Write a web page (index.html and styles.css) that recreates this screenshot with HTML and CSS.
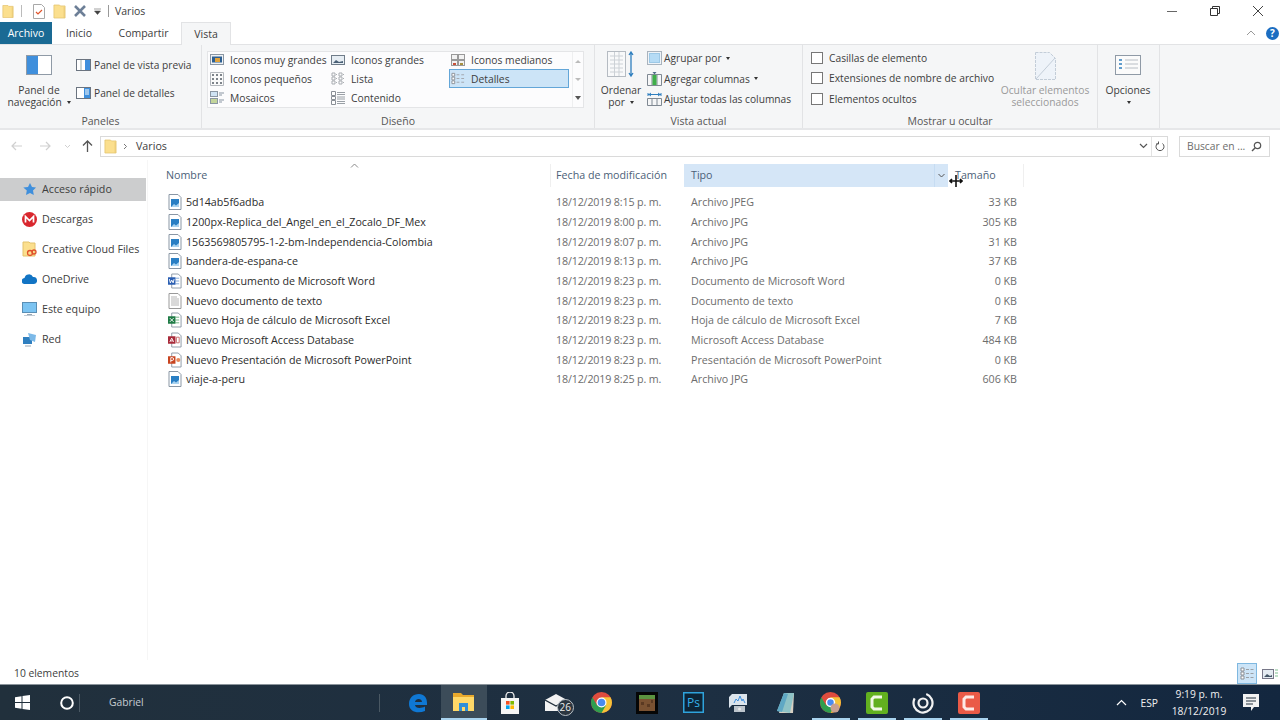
FILE: index.html
```html
<!DOCTYPE html>
<html lang="es">

<head>
    <title>Varios</title>
    <link rel="stylesheet" href="styles.css">
</head>

<body>
    <svg class="defs" width="0" height="0">
        <symbol id="folder" viewBox="0 0 14 16">
            <path d="M1 1h6l1 1h5v13H1z" fill="#fbdf8e" stroke="#e3c26c" stroke-width=".8"/>
            <path d="M12 3v12" stroke="#e8c874"/>
        </symbol>
        <symbol id="jpg" viewBox="0 0 14 16">
            <path d="M1 .5h9l3 3v12H1z" fill="#fff" stroke="#8a97a5"/>
            <rect x="3" y="5" width="8" height="8" fill="#2a7fc4"/>
            <path d="M3 13l3-3 2 1.500 3-2.500v4z" fill="#a9d3f0"/>
        </symbol>
        <symbol id="doc" viewBox="0 0 14 16">
            <path d="M1 .5h9l3 3v12H1z" fill="#fff" stroke="#9a9a9a"/>
            <path d="M3 4h6M3 6h8M3 8h8M3 10h8M3 12h8" stroke="#b5b5b5"/>
        </symbol>
    </svg>

    <!-- title bar -->
    <div class="titlebar">
        <svg class="qa" width="12" height="15"><use href="#folder"/></svg>
        <span class="qa-sep"></span>
        <svg class="qa" width="12" height="15" viewBox="0 0 12 15"><path d="M.5.5h8l3 3v11H.5z" fill="#fff" stroke="#a8a8a8"/><path d="M3 8l2 2 4-4" fill="none" stroke="#e0552c" stroke-width="1.200"/></svg>
        <svg class="qa" width="13" height="15"><use href="#folder"/></svg>
        <svg class="qa" width="12" height="12" viewBox="0 0 12 12"><path d="M1 1l10 10M11 1L1 11" stroke="#6d7f97" stroke-width="2.600"/></svg>
        <svg class="qa qa-drop" width="7" height="7" viewBox="0 0 7 7"><path d="M0 1h7M.5 3h6L3.500 6.500z" fill="#444" stroke="#444" stroke-width=".5"/></svg>
        <span class="qa-sep qa-sep-two"></span>
        <span class="title">Varios</span>
        <div class="winbtns">
            <svg width="12" height="12" viewBox="0 0 12 12"><path d="M1 6.500h10" stroke="#666"/></svg>
            <svg width="12" height="12" viewBox="0 0 12 12"><path d="M1.500 3.500h7v7h-7zM3.500 3.500v-2h7v7h-2" fill="none" stroke="#333"/></svg>
            <svg width="12" height="12" viewBox="0 0 12 12"><path d="M1 1l10 10M11 1L1 11" stroke="#444"/></svg>
        </div>
    </div>

    <!-- tabs -->
    <div class="tabs">
        <div class="tab tab-file">Archivo</div>
        <div class="tab tab-inicio">Inicio</div>
        <div class="tab tab-compartir">Compartir</div>
        <div class="tab tab-active">Vista</div>
        <div class="tabs-right">
            <svg width="10" height="6" viewBox="0 0 10 6"><path d="M1 5l4-4 4 4" fill="none" stroke="#999"/></svg>
            <span class="help">?</span>
        </div>
    </div>

    <!-- ribbon -->
    <div class="ribbon">
        <div class="group group-paneles">
            <div class="group-body">
                <div class="bigbtn bigbtn-nav">
                    <svg width="26" height="20" viewBox="0 0 26 20"><rect x=".5" y=".5" width="25" height="19" fill="#fff" stroke="#8f9aa6"/><rect x="1" y="1" width="11" height="18" fill="#3f8fdc"/></svg>
                    <span>Panel de<br>navegación <i class="caret"></i></span>
                </div>
                <div class="smallcol">
                    <div class="smallbtn"><svg width="15" height="12" viewBox="0 0 15 12"><rect x=".5" y=".5" width="14" height="11" fill="#fff" stroke="#6b7480"/><rect x="9" y="1" width="5" height="10" fill="#3f8fdc"/><path d="M5 1v10" stroke="#9aa"/></svg>Panel de vista previa</div>
                    <div class="smallbtn"><svg width="15" height="12" viewBox="0 0 15 12"><rect x=".5" y=".5" width="14" height="11" fill="#fff" stroke="#6b7480"/><rect x="8" y="1" width="6" height="10" fill="#3f8fdc"/><path d="M9 3h4M9 5h4M9 7h4" stroke="#fff"/></svg>Panel de detalles</div>
                </div>
            </div>
            <div class="group-label">Paneles</div>
        </div>

        <div class="group group-diseno">
            <div class="group-body">
                <div class="gallery">
                    <div class="gallery-grid">
                        <div class="gitem gitem-one"><svg width="14" height="11" viewBox="0 0 14 11"><rect x=".5" y=".5" width="13" height="10" fill="#eef2f6" stroke="#8a96a3"/><rect x="2" y="2.500" width="10" height="6" fill="#2d5f92"/><rect x="5" y="4" width="5" height="4" fill="#e0a23c"/></svg>Iconos muy grandes</div>
                        <div class="gitem gitem-two"><svg width="14" height="10" viewBox="0 0 14 10"><rect x=".5" y=".5" width="13" height="9" fill="#e6edf3" stroke="#6f7c89"/><path d="M2 8l3-3 3 2 4-1v2z" fill="#4a6076"/></svg>Iconos grandes</div>
                        <div class="gitem gitem-three"><svg width="14" height="12" viewBox="0 0 14 12"><rect x=".5" y=".5" width="6" height="5" fill="#f2f2f2" stroke="#999"/><rect x="7.500" y=".5" width="6" height="5" fill="#f2f2f2" stroke="#999"/><rect x=".5" y="6.500" width="6" height="5" fill="#f2f2f2" stroke="#999"/><rect x="7.500" y="6.500" width="6" height="5" fill="#f2f2f2" stroke="#999"/><path d="M2 9h3v2H2z" fill="#c9513a"/><path d="M9 9h3v2H9z" fill="#a8903f"/></svg>Iconos medianos</div>
                        <div class="gitem gitem-one"><svg width="14" height="14" viewBox="0 0 14 14"><path d="M.5.5h13v13H.5z" fill="#fafafa" stroke="#b5b9be"/><path d="M2 2h2v2H2zM6 2h2v2H6zM10 2h2v2h-2zM2 6h2v2H2zM6 6h2v2H6zM10 6h2v2h-2zM2 10h2v2H2zM6 10h2v2H6zM10 10h2v2h-2z" fill="#7d838a"/></svg>Iconos pequeños</div>
                        <div class="gitem gitem-two"><svg width="14" height="13" viewBox="0 0 14 13"><path d="M1 1h3v3H1zM1 5h3v3H1zM1 9h3v3H1zM8 1h3v3H8zM8 5h3v3H8zM8 9h3v3H8z" fill="none" stroke="#a9adb2"/><path d="M5 2.500h1M5 6.500h1M5 10.500h1M12 2.500h1M12 6.500h1M12 10.500h1" stroke="#a9adb2"/></svg>Lista</div>
                        <div class="gitem gitem-three gitem-selected"><svg width="15" height="13" viewBox="0 0 15 13"><path d="M1 1h3v3H1zM1 5h3v3H1zM1 9h3v3H1z" fill="#fff" stroke="#8a8f96"/><path d="M6 2.500h3M11 2.500h3M6 6.500h3M11 6.500h3M6 10.500h3M11 10.500h3" stroke="#a0a4a9"/></svg>Detalles</div>
                        <div class="gitem gitem-one"><svg width="14" height="13" viewBox="0 0 14 13"><rect x=".5" y=".5" width="7" height="5" fill="#cfe3f4" stroke="#8a96a3"/><rect x=".5" y="7.500" width="7" height="5" fill="#c3d59b" stroke="#8a96a3"/><path d="M9 2h5M9 4h3M9 9h5M9 11h3" stroke="#8a96a3"/></svg>Mosaicos</div>
                        <div class="gitem gitem-two"><svg width="14" height="14" viewBox="0 0 14 14"><path d="M.5.5h4v4h-4zM.5 5.500h4v3h-4zM.5 9.500h4v4h-4z" fill="#fff" stroke="#8a8f96"/><path d="M6 1.500h8M6 3.500h8M6 6h8M6 8h8M6 10.500h8M6 12.500h8" stroke="#9aa0a6"/></svg>Contenido</div>
                    </div>
                    <div class="gallery-scroll">
                        <i class="gs-up"></i>
                        <i class="gs-down"></i>
                        <i class="gs-more"></i>
                    </div>
                </div>
            </div>
            <div class="group-label">Diseño</div>
        </div>

        <div class="group group-vista">
            <div class="group-body">
                <div class="bigbtn bigbtn-ordenar">
                    <svg width="28" height="27" viewBox="0 0 28 27"><rect x=".5" y=".5" width="18" height="25" fill="#f8f9fa" stroke="#b5bbc2"/><path d="M3 5h13M3 9h13M3 13h13M3 17h13M3 21h13M7.500 1v24M12 1v24" stroke="#ccd1d6"/><path d="M24 2v22M22 4l2-3 2 3M22 22l2 3 2-3" fill="none" stroke="#2f7fbf" stroke-width="1.300"/></svg>
                    <span>Ordenar<br>por <i class="caret"></i></span>
                </div>
                <div class="smallcol smallcol-vista">
                    <div class="smallbtn"><svg width="15" height="14" viewBox="0 0 15 14"><rect x=".5" y=".5" width="14" height="13" fill="#eef3f8" stroke="#a9b3bd"/><rect x="2.500" y="2.500" width="10" height="9" fill="#b5dbf5" stroke="#9cc8e6"/></svg>Agrupar por <i class="caret"></i></div>
                    <div class="smallbtn"><svg width="15" height="14" viewBox="0 0 15 14"><path d="M.5 2.500h14v11H.5zM5 3v10M10 3v10" fill="none" stroke="#7f8892"/><rect x="5.500" y="3" width="4" height="10" fill="#3fae49"/><path d="M5.500 0h4L7.500 2.500z" fill="#4d6a86"/></svg>Agregar columnas <i class="caret"></i></div>
                    <div class="smallbtn"><svg width="15" height="14" viewBox="0 0 15 14"><path d="M1 2.500h13M1 1v3M14 1v3M4 1L2 2.500 4 4M11 1l2 1.500L11 4" fill="none" stroke="#2f7fbf"/><path d="M.5 6.500h14v7H.5zM5 7v6M10 7v6" fill="none" stroke="#7f8892"/></svg>Ajustar todas las columnas</div>
                </div>
            </div>
            <div class="group-label">Vista actual</div>
        </div>

        <div class="group group-mostrar">
            <div class="group-body">
                <div class="checks">
                    <label class="check"><i></i>Casillas de elemento</label>
                    <label class="check"><i></i>Extensiones de nombre de archivo</label>
                    <label class="check"><i></i>Elementos ocultos</label>
                </div>
                <div class="bigbtn bigbtn-ocultar">
                    <svg width="21" height="28" viewBox="0 0 21 28"><path d="M.5.5h14l6 6v21H.5z" fill="#eef3f9" stroke="#c3cdd8" stroke-dasharray="3 1"/><path d="M1 27L20 6" stroke="#c3cdd8"/></svg>
                    <span>Ocultar elementos<br>seleccionados</span>
                </div>
            </div>
            <div class="group-label">Mostrar u ocultar</div>
        </div>

        <div class="group group-opciones">
            <div class="group-body">
                <div class="bigbtn bigbtn-opciones">
                    <svg width="26" height="20" viewBox="0 0 26 20"><rect x=".5" y=".5" width="25" height="19" fill="#fbfbfb" stroke="#8f9aa6"/><path d="M4 5h3M4 9h3M4 13h3" stroke="#2f7fbf" stroke-width="1.500"/><path d="M10 5h13M10 9h13M10 13h13" stroke="#b8bec5"/></svg>
                    <span>Opciones<br><i class="caret"></i></span>
                </div>
            </div>
        </div>
    </div>

    <!-- address bar -->
    <div class="addressrow">
        <div class="navbtns">
            <svg width="12" height="10" viewBox="0 0 12 10"><path d="M11 5H1M5 1L1 5l4 4" fill="none" stroke="#d0d0d0" stroke-width="1.200"/></svg>
            <svg width="12" height="10" viewBox="0 0 12 10"><path d="M1 5h10M7 1l4 4-4 4" fill="none" stroke="#d0d0d0" stroke-width="1.200"/></svg>
            <svg width="7" height="5" viewBox="0 0 7 5"><path d="M1 1l2.500 2.500L6 1" fill="none" stroke="#d0d0d0"/></svg>
            <svg width="11" height="12" viewBox="0 0 11 12"><path d="M5.500 12V1M1 5.500L5.500 1 10 5.500" fill="none" stroke="#555" stroke-width="1.300"/></svg>
        </div>
        <div class="addressbox">
            <svg width="13" height="15"><use href="#folder"/></svg>
            <svg class="crumb" width="5" height="7" viewBox="0 0 5 7"><path d="M1 1l2.500 2.500L1 6" fill="none" stroke="#777"/></svg>
            <span class="crumb-text">Varios</span>
            <svg class="addr-chevron" width="9" height="6" viewBox="0 0 9 6"><path d="M1 1l3.500 3.500L8 1" fill="none" stroke="#555" stroke-width="1.200"/></svg>
            <span class="addr-div"></span>
            <svg class="addr-refresh" width="10" height="11" viewBox="0 0 10 11"><path d="M7.500 2.500a4 4 0 1 1-5 0M3.500 .5v2.500H1" fill="none" stroke="#555"/></svg>
        </div>
        <div class="searchbox">
            <span>Buscar en ...</span>
            <svg width="11" height="11" viewBox="0 0 11 11"><circle cx="6.500" cy="4.500" r="3.200" fill="none" stroke="#555" stroke-width="1.200"/><path d="M4 7l-3 3" stroke="#555" stroke-width="1.400"/></svg>
        </div>
    </div>

    <!-- main -->
    <div class="main">
        <div class="sidebar">
            <div class="navitem navitem-active"><svg width="15" height="14" viewBox="0 0 15 14"><path d="M8 1l2 4 4 .5-3 3 .8 4.500L8 11l-4 2 .8-4.500-3.500-3L6 5z" fill="#3f8fdc"/></svg>Acceso rápido</div>
            <div class="navitem"><svg width="15" height="15" viewBox="0 0 15 15"><circle cx="7.500" cy="7.500" r="7.500" fill="#d9272e"/><path d="M3.500 10.500v-6l4 4 4-4v6" fill="none" stroke="#fff" stroke-width="1.700"/></svg>Descargas</div>
            <div class="navitem"><svg width="15" height="16" viewBox="0 0 15 16"><path d="M1 1h6l1 1h5v13H1z" fill="#fbdf8e" stroke="#e3c26c"/><circle cx="8" cy="12" r="2.500" fill="none" stroke="#e0502c" stroke-width="1.300"/><circle cx="12" cy="11" r="2" fill="none" stroke="#e0502c" stroke-width="1.300"/></svg>Creative Cloud Files</div>
            <div class="navitem"><svg width="15" height="10" viewBox="0 0 15 10"><path d="M3 10a3 3 0 0 1-.5-6A4.500 4.500 0 0 1 11 3a3.500 3.500 0 0 1 1 7z" fill="#1274c4"/></svg>OneDrive</div>
            <div class="navitem"><svg width="15" height="14" viewBox="0 0 15 14"><rect x=".5" y=".5" width="14" height="10" fill="#7cc4f2" stroke="#5a8fb5"/><path d="M5 12h5v1H5z" fill="#9aa7b3"/><path d="M2 13.500h11" stroke="#c2ccd5"/></svg>Este equipo</div>
            <div class="navitem"><svg width="15" height="15" viewBox="0 0 15 15"><rect x="1" y="5" width="9" height="7" fill="#2f7fbf"/><path d="M6 1l8 2-1 7-5-2z" fill="#7cb9e8"/><path d="M3 14h6" stroke="#9aa7b3"/></svg>Red</div>
        </div>

        <div class="files">
            <div class="fileshead">
                <div class="th th-name">Nombre<svg class="sortcaret" width="9" height="5" viewBox="0 0 9 5"><path d="M1 4.500L4.500 1 8 4.500" fill="none" stroke="#8a8a8a"/></svg></div>
                <div class="th th-date">Fecha de modificación</div>
                <div class="th th-type">Tipo<span class="th-drop"><svg width="7" height="5" viewBox="0 0 7 5"><path d="M.5 1l3 3 3-3" fill="none" stroke="#555"/></svg></span></div>
                <div class="th th-size">Tamaño</div>
            </div>

            <div class="filerows">
                <div class="row">
                    <div class="name"><svg width="14" height="16"><use href="#jpg"/></svg>5d14ab5f6adba</div>
                    <div class="date">18/12/2019 8:15 p. m.</div>
                    <div class="type">Archivo JPEG</div>
                    <div class="size">33 KB</div>
                </div>
                <div class="row">
                    <div class="name"><svg width="14" height="16"><use href="#jpg"/></svg>1200px-Replica_del_Angel_en_el_Zocalo_DF_Mex</div>
                    <div class="date">18/12/2019 8:00 p. m.</div>
                    <div class="type">Archivo JPG</div>
                    <div class="size">305 KB</div>
                </div>
                <div class="row">
                    <div class="name"><svg width="14" height="16"><use href="#jpg"/></svg>1563569805795-1-2-bm-Independencia-Colombia</div>
                    <div class="date">18/12/2019 8:07 p. m.</div>
                    <div class="type">Archivo JPG</div>
                    <div class="size">31 KB</div>
                </div>
                <div class="row">
                    <div class="name"><svg width="14" height="16"><use href="#jpg"/></svg>bandera-de-espana-ce</div>
                    <div class="date">18/12/2019 8:13 p. m.</div>
                    <div class="type">Archivo JPG</div>
                    <div class="size">37 KB</div>
                </div>
                <div class="row">
                    <div class="name"><svg width="15" height="16" viewBox="0 0 15 16"><path d="M4 .5h7l3 3v12H4z" fill="#fff" stroke="#8a97a5"/><path d="M8 5h4M8 8h4M8 11h4" stroke="#7aa3d6"/><rect y="4" width="8" height="8" fill="#2b5fb3"/><path d="M1.500 6l1 4 1.500-3 1.500 3 1-4" fill="none" stroke="#fff"/></svg>Nuevo Documento de Microsoft Word</div>
                    <div class="date">18/12/2019 8:23 p. m.</div>
                    <div class="type">Documento de Microsoft Word</div>
                    <div class="size">0 KB</div>
                </div>
                <div class="row">
                    <div class="name"><svg width="14" height="16"><use href="#doc"/></svg>Nuevo documento de texto</div>
                    <div class="date">18/12/2019 8:23 p. m.</div>
                    <div class="type">Documento de texto</div>
                    <div class="size">0 KB</div>
                </div>
                <div class="row">
                    <div class="name"><svg width="15" height="16" viewBox="0 0 15 16"><path d="M4 .5h7l3 3v12H4z" fill="#fff" stroke="#8a97a5"/><path d="M8 5h4M8 8h4M8 11h4" stroke="#6bb07e"/><rect y="4" width="8" height="8" fill="#1e7b45"/><path d="M2 6l4 4M6 6l-4 4" stroke="#fff"/></svg>Nuevo Hoja de cálculo de Microsoft Excel</div>
                    <div class="date">18/12/2019 8:23 p. m.</div>
                    <div class="type">Hoja de cálculo de Microsoft Excel</div>
                    <div class="size">7 KB</div>
                </div>
                <div class="row">
                    <div class="name"><svg width="15" height="16" viewBox="0 0 15 16"><path d="M4 .5h7l3 3v12H4z" fill="#fff" stroke="#8a97a5"/><path d="M9 5h3v6H9z" fill="none" stroke="#c76a6a"/><rect y="4" width="8" height="8" fill="#a82a3a"/><path d="M2 10l2-4 2 4M2.800 9h2.400" fill="none" stroke="#fff"/></svg>Nuevo Microsoft Access Database</div>
                    <div class="date">18/12/2019 8:23 p. m.</div>
                    <div class="type">Microsoft Access Database</div>
                    <div class="size">484 KB</div>
                </div>
                <div class="row">
                    <div class="name"><svg width="15" height="16" viewBox="0 0 15 16"><path d="M4 .5h7l3 3v12H4z" fill="#fff" stroke="#8a97a5"/><circle cx="11" cy="8" r="2.200" fill="#e88a5c"/><rect y="4" width="8" height="8" fill="#c8431f"/><path d="M3 10.500v-5h1.500a1.300 1.300 0 0 1 0 3H3" fill="none" stroke="#fff"/></svg>Nuevo Presentación de Microsoft PowerPoint</div>
                    <div class="date">18/12/2019 8:23 p. m.</div>
                    <div class="type">Presentación de Microsoft PowerPoint</div>
                    <div class="size">0 KB</div>
                </div>
                <div class="row">
                    <div class="name"><svg width="14" height="16"><use href="#jpg"/></svg>viaje-a-peru</div>
                    <div class="date">18/12/2019 8:25 p. m.</div>
                    <div class="type">Archivo JPG</div>
                    <div class="size">606 KB</div>
                </div>
            </div>
        </div>
    </div>

    <!-- status bar -->
    <div class="statusbar">
        <span>10 elementos</span>
        <div class="viewbtns">
            <div class="viewbtn viewbtn-on"><svg width="14" height="13" viewBox="0 0 14 13"><path d="M1 1h3v3H1zM1 5h3v3H1zM1 9h3v3H1z" fill="#fff" stroke="#8a8f96"/><path d="M6 2.500h3M10.500 2.500h3M6 6.500h3M10.500 6.500h3M6 10.500h3M10.500 10.500h3" stroke="#9aa0a6"/></svg></div>
            <div class="viewbtn"><svg width="16" height="12" viewBox="0 0 16 12"><rect x=".5" y="1.500" width="11" height="9" fill="#e4ebf1" stroke="#778"/><path d="M2 9l3-3 3 2 2-1v2z" fill="#456"/><path d="M13 2h3M13 5h3M13 8h3" stroke="#7fbf8f"/></svg></div>
        </div>
    </div>

    <!-- taskbar -->
    <div class="taskbar">
        <div class="tb-start"><svg width="15" height="15" viewBox="0 0 15 15"><path d="M0 2.200L6.500 1.200V7H0zM7.500 1L15 0v7H7.500zM0 8h6.500v5.800L0 12.800zM7.500 8H15v7l-7.500-1z" fill="#fff"/></svg></div>
        <div class="tb-cortana"><svg width="14" height="14" viewBox="0 0 14 14"><circle cx="7" cy="7" r="5.800" fill="none" stroke="#fff" stroke-width="2"/></svg></div>
        <span class="tb-div"></span>
        <span class="tb-search">Gabriel</span>
        <span class="tb-div tb-div-two"></span>
        <div class="tb-apps">
            <div class="app"><svg width="20" height="20" viewBox="0 0 20 20"><path d="M1 11C1 5 5 1 11 1c5 0 8 3.500 8 9v2H7c.3 3 5 4 10 1.500V18c-7 3-16 1-16-7zm6-2h7c0-4-6.500-4-7 0z" fill="#0f78d4"/></svg></div>
            <div class="app app-active"><svg width="21" height="19" viewBox="0 0 21 19"><path d="M0 1h8l2 2h11v3H0z" fill="#e9a92c"/><path d="M0 5h21v14H0z" fill="#ffd868"/><rect x="6" y="11" width="9" height="8" fill="#2f8fd8"/><rect x="9" y="15" width="3" height="4" fill="#ffd868"/></svg></div>
            <div class="app"><svg width="20" height="22" viewBox="0 0 20 22"><path d="M6 7V4a4 4 0 0 1 8 0v3" fill="none" stroke="#eee" stroke-width="1.300"/><rect x="1" y="6" width="18" height="16" fill="#f5f5f5"/><rect x="6" y="9" width="3.600" height="3.600" fill="#f25022"/><rect x="10.400" y="9" width="3.600" height="3.600" fill="#7fba00"/><rect x="6" y="13.400" width="3.600" height="3.600" fill="#00a4ef"/><rect x="10.400" y="13.400" width="3.600" height="3.600" fill="#ffb900"/></svg></div>
            <div class="app app-mail"><svg width="22" height="17" viewBox="0 0 22 17"><path d="M0 6l11-6 11 6v11H0z" fill="#f3f3f3"/><path d="M0 6l11 6 11-6" fill="none" stroke="#22303c" stroke-width="1.300"/></svg><span class="badge">26</span></div>
            <div class="app"><svg width="21" height="21" viewBox="0 0 21 21"><circle cx="10.500" cy="10.500" r="10.500" fill="#de4c3e"/><path d="M10.500 21a10.500 10.500 0 0 0 9-15.800H10.500z" fill="#f6c338"/><path d="M1.400 5.300A10.500 10.500 0 0 0 10.500 21l4.500-7.800-9 0z" fill="#2f9e4f"/><circle cx="10.500" cy="10.500" r="5" fill="#fff"/><circle cx="10.500" cy="10.500" r="3.800" fill="#4a8bf0"/></svg></div>
            <div class="app"><svg width="22" height="22" viewBox="0 0 22 22"><rect width="22" height="22" fill="#060606"/><rect x="3" y="3" width="16" height="16" fill="#7a5232"/><rect x="3" y="3" width="16" height="4" fill="#5c9440"/><path d="M5 10h3v3H5zM11 12h3v3h-3zM15 8h2v3h-2z" fill="#5b3a22"/></svg></div>
            <div class="app"><svg width="21" height="21" viewBox="0 0 21 21"><rect x=".75" y=".75" width="19.500" height="19.500" fill="#0d2436" stroke="#2fa3dc" stroke-width="1.500"/><text x="10.500" y="15" class="ps">Ps</text></svg></div>
            <div class="app"><svg width="22" height="21" viewBox="0 0 22 21"><path d="M1 5l3-3h15v11H4l-3 3z" fill="#dbe4ec"/><path d="M6 11l2-4 2 2 2-5 2 5 1-2 2 4" fill="none" stroke="#3f8fdc"/><path d="M6 14h11v6H6z" fill="#bcc4cb"/><circle cx="11.500" cy="17" r="1.500" fill="#e8e8e8"/></svg></div>
            <div class="app"><svg width="19" height="22" viewBox="0 0 19 22"><path d="M8 1h10l-1 20H3z" fill="#d6cfc2"/><path d="M8 1L1 19l13 2 4-20z" fill="#8ec3c6"/><path d="M8 1L1 19l5 1L12 2z" fill="#5fa8c4"/></svg></div>
            <div class="app app-run"><svg width="21" height="21" viewBox="0 0 21 21"><circle cx="10.500" cy="10.500" r="10.500" fill="#de4c3e"/><path d="M10.500 21a10.500 10.500 0 0 0 9-15.800H10.500z" fill="#f6c338"/><path d="M1.400 5.300A10.500 10.500 0 0 0 10.500 21l4.500-7.800-9 0z" fill="#2f9e4f"/><circle cx="10.500" cy="10.500" r="4" fill="#4a8bf0" stroke="#fff" stroke-width="1.500"/><circle cx="15" cy="16" r="4.500" fill="#c9a090"/></svg></div>
            <div class="app app-run"><svg width="22" height="22" viewBox="0 0 22 22"><rect width="22" height="22" rx="2" fill="#62b01f"/><path d="M16 5H8l-2 2v8l2 2h8" fill="none" stroke="#f1f8e6" stroke-width="3"/></svg></div>
            <div class="app app-run"><svg width="22" height="22" viewBox="0 0 22 22"><circle cx="11" cy="11" r="9.500" fill="none" stroke="#f2f2f2" stroke-width="2.200" stroke-dasharray="46 14" transform="rotate(-70 11 11)"/><circle cx="11" cy="11" r="4.500" fill="none" stroke="#f2f2f2" stroke-width="2.200"/></svg></div>
            <div class="app app-run"><svg width="22" height="22" viewBox="0 0 22 22"><rect width="22" height="22" rx="2" fill="#ea5a47"/><path d="M16 5H8l-2 2v8l2 2h8" fill="none" stroke="#fde9e5" stroke-width="3"/></svg></div>
        </div>
        <div class="tb-tray">
            <svg class="tray-up" width="11" height="7" viewBox="0 0 11 7"><path d="M1 6l4.500-4.500L10 6" fill="none" stroke="#fff" stroke-width="1.200"/></svg>
            <span class="tray-lang">ESP</span>
            <div class="clock">9:19 p. m.<br>18/12/2019</div>
            <svg class="tray-note" width="16" height="18" viewBox="0 0 16 18"><path d="M0 0h16v13h-5l-3 4v-4H0z" fill="#f2f2f2"/><path d="M3 4h10M3 7h10M3 10h7" stroke="#22303c"/></svg>
        </div>
    </div>

    <!-- mouse cursor -->
    <svg class="cursor" width="14" height="14" viewBox="0 0 14 14"><path d="M7 1v12M1 7h12M3 5L1 7l2 2M11 5l2 2-2 2" fill="none" stroke="#111" stroke-width="1.600"/></svg>
</body>

</html>
```

FILE: styles.css
```css
* {
    box-sizing: border-box;
}

html,
body {
    margin: 0;
    height: 720px;
    overflow: hidden;
}

body {
    position: relative;
    display: flex;
    flex-direction: column;
    background-color: #fff;
    font-family: "Open Sans", "Liberation Sans", sans-serif;
    font-size: 11px;
    line-height: 12px;
    color: #3d3d3d;
}

.defs {
    position: absolute;
}

svg {
    flex: none;
    display: block;
}

/* title bar */
.titlebar {
    display: flex;
    align-items: center;
    height: 22px;
    padding-left: 2px;
    flex: none;
}

.qa-sep {
    width: 1px;
    height: 12px;
    margin: 0 11px 0 7px;
    background-color: #bbb;
}

.qa + .qa {
    margin-left: 8px;
}

.qa-sep-two {
    margin: 0 6px 0 7px;
    background-color: #999;
}

.title {
    font-size: 10.500px;
}

.winbtns {
    display: flex;
    gap: 31px;
    margin-left: auto;
    padding-right: 16px;
}

/* tabs */
.tabs {
    display: flex;
    height: 22px;
    flex: none;
    position: relative;
}

.tab {
    display: flex;
    align-items: center;
    justify-content: center;
    height: 22px;
    font-size: 10.500px;
}

.tab-file {
    width: 52px;
    background-color: #1a6a94;
    color: #fff;
}

.tab-inicio {
    width: 54px;
}

.tab-compartir {
    width: 75px;
}

.tab-active {
    width: 50px;
    height: 23px;
    border: 1px solid #e2e3e5;
    border-bottom: none;
    background-color: #f5f6f7;
    z-index: 1;
}

.tabs-right {
    display: flex;
    align-items: center;
    gap: 10px;
    margin-left: auto;
    padding-right: 1px;
}

.help {
    width: 13px;
    height: 13px;
    border-radius: 50%;
    background-color: #1b6dc1;
    color: #fff;
    font-size: 10px;
    font-weight: 700;
    line-height: 13px;
    text-align: center;
}

/* ribbon */
.ribbon {
    display: flex;
    height: 86px;
    flex: none;
    background-color: #f5f6f7;
    border-top: 1px solid #e2e3e5;
    border-bottom: 2px solid #e6e7e9;
}

.group {
    display: flex;
    flex-direction: column;
    border-right: 1px solid #e2e3e5;
}

.group-paneles {
    width: 202px;
}

.group-diseno {
    width: 393px;
}

.group-vista {
    width: 208px;
}

.group-mostrar {
    width: 295px;
}

.group-opciones {
    width: 62px;
}

.group-body {
    display: flex;
    height: 70px;
}

.group-label {
    text-align: center;
    font-size: 10.500px;
    color: #555;
}

.bigbtn {
    display: flex;
    flex-direction: column;
    align-items: center;
    text-align: center;
    font-size: 10.300px;
}

.bigbtn span {
    display: block;
    margin-top: 9px;
}

.bigbtn-nav {
    width: 76px;
    padding: 10px 0 0 2px;
}

.bigbtn-ordenar {
    width: 52px;
    padding-top: 6px;
}

.bigbtn-ordenar span {
    margin-top: 6px;
}

.bigbtn-ocultar {
    width: 100px;
    margin-left: auto;
    margin-right: 2px;
    padding-top: 7px;
    color: #9a9a9a;
}

.bigbtn-ocultar span {
    margin-top: 4px;
}

.bigbtn-opciones {
    width: 60px;
    padding-top: 10px;
}

.caret {
    display: inline-block;
    width: 0;
    height: 0;
    margin-left: 2px;
    vertical-align: 2px;
    border: 2.500px solid transparent;
    border-top: 3px solid #333;
    border-bottom: none;
}

.smallcol {
    display: flex;
    flex-direction: column;
    gap: 9.500px;
    padding-top: 11px;
}

.smallbtn {
    display: flex;
    align-items: center;
    gap: 3px;
    height: 18px;
    font-size: 10.200px;
}

.smallcol-vista {
    gap: 2.500px;
    padding-top: 4px;
}

.smallcol-vista .smallbtn {
    gap: 2px;
}

.gallery {
    display: flex;
    width: 377px;
    height: 57px;
    margin: 6px 0 0 5px;
    border: 1px solid #e4e5e7;
    background-color: #fcfcfd;
}

.gallery-grid {
    display: grid;
    grid-template-columns: 121px 120px 120px;
    grid-auto-rows: 19px;
    margin-top: -2px;
    width: 365px;
}

.gitem {
    display: flex;
    align-items: center;
    gap: 6px;
    padding-left: 2px;
    font-size: 10.300px;
    white-space: nowrap;
}

.gitem svg {
    width: 14px;
}

.gitem-selected {
    background-color: #cce4f7;
    border: 1px solid #63a6d8;
    width: 120px;
    padding-left: 1px;
}

.gallery-scroll {
    width: 11px;
    border-left: 1px solid #eeeff0;
    display: flex;
    flex-direction: column;
    align-items: center;
    justify-content: space-around;
}

.gallery-scroll i {
    width: 0;
    height: 0;
    border-left: 3px solid transparent;
    border-right: 3px solid transparent;
}

.gs-up {
    border-bottom: 3px solid #bbb;
}

.gs-down {
    border-top: 3px solid #bbb;
}

.gs-more {
    border-top: 4px solid #555;
}

.checks {
    display: flex;
    flex-direction: column;
    gap: 7.500px;
    padding: 6px 0 0 8px;
}

.check {
    display: flex;
    align-items: center;
    gap: 6px;
    height: 13px;
    font-size: 10.250px;
    white-space: nowrap;
}

.check i {
    width: 12px;
    height: 12px;
    border: 1px solid #777;
    background-color: #fff;
}

/* address bar */
.addressrow {
    display: flex;
    align-items: center;
    height: 30px;
    padding-top: 2px;
    flex: none;
}

.navbtns {
    display: flex;
    align-items: center;
    width: 100px;
    padding-left: 11px;
}

.navbtns svg:nth-child(1) {
    margin-right: 16px;
}

.navbtns svg:nth-child(2) {
    margin-right: 13px;
}

.navbtns svg:nth-child(3) {
    margin-right: 11px;
}

.addressbox {
    display: flex;
    align-items: center;
    width: 1068px;
    height: 21px;
    padding-left: 3px;
    border: 1px solid #dadada;
}

.crumb {
    margin: 0 8px 0 6px;
}

.crumb-text {
    font-size: 10.700px;
}

.addr-chevron {
    margin-left: auto;
    margin-right: 3px;
}

.addr-div {
    width: 1px;
    height: 19px;
    background-color: #e3e3e3;
}

.addr-refresh {
    margin: 0 2px 0 3px;
}

.searchbox {
    display: flex;
    align-items: center;
    justify-content: space-between;
    width: 91px;
    height: 21px;
    margin-left: 11px;
    padding: 0 7px 0 7px;
    border: 1px solid #dadada;
    color: #6d6d6d;
    font-size: 10.300px;
}

/* main */
.main {
    display: flex;
    flex: 1;
    min-height: 0;
}

.sidebar {
    width: 148px;
    flex: none;
    padding-top: 18px;
    border-right: 1px solid #f6f6f6;
}

.navitem {
    display: flex;
    align-items: center;
    gap: 5px;
    height: 30px;
    padding: 0 0 2px 22px;
    white-space: nowrap;
    font-size: 10.700px;
}

.navitem svg {
    margin-top: 1px;
}

.navitem-active {
    height: 23px;
    width: 146px;
    margin-bottom: 3.500px;
    background-color: #cccdce;
}

.files {
    flex: 1;
    padding: 4px 0 0 14px;
}

.fileshead,
.row {
    display: grid;
    grid-template-columns: 388px 134px 264px 76px;
    width: 862px;
}

.fileshead {
    height: 23px;
    color: #4c5f78;
}

.th {
    position: relative;
    display: flex;
    align-items: center;
    height: 23px;
    padding: 0 0 2px 4px;
    font-size: 10.700px;
}

.sortcaret {
    position: absolute;
    left: 188px;
    top: -1px;
}

.th-date {
    padding-left: 5px;
    border-left: 1px solid #efefef;
}

.th-type {
    padding-left: 7px;
    background-color: #d5e6f7;
}

.th-drop {
    display: flex;
    align-items: center;
    justify-content: center;
    width: 14px;
    height: 23px;
    margin: 0 0 -2px auto;
    border-left: 1px solid #c6dcf2;
}

.th-size {
    padding-left: 7px;
    border-right: 1px solid #efefef;
}

.filerows {
    padding-top: 5.400px;
}

.row {
    height: 19.700px;
    align-items: center;
    font-size: 10.700px;
    white-space: nowrap;
    color: #6d6d6d;
}

.name {
    display: flex;
    align-items: center;
    gap: 4px;
    padding-left: 6px;
    color: #2c2c2c;
}

.name svg {
    width: 14px;
}

.date {
    padding-left: 6px;
    letter-spacing: -.15px;
}

.type {
    padding-left: 7px;
}

.size {
    padding-right: 7px;
    text-align: right;
}

/* status bar */
.statusbar {
    display: flex;
    align-items: center;
    justify-content: space-between;
    height: 24px;
    flex: none;
    padding: 1px 0 0 14px;
    font-size: 10.300px;
}

.viewbtns {
    display: flex;
    gap: 3px;
    align-self: flex-end;
}

.viewbtn {
    display: flex;
    align-items: center;
    justify-content: center;
    width: 20px;
    height: 21px;
    overflow: hidden;
}

.viewbtn-on {
    background-color: #cce4f7;
    border: 1px solid #7fb8e0;
}

/* taskbar */
.taskbar {
    display: flex;
    align-items: center;
    height: 36px;
    flex: none;
    border-top: 1px solid #8b949b;
    background: linear-gradient(90deg, #21303c, #1d2f42 55%, #13273f);
    color: #d8dde2;
}

.tb-start {
    width: 46px;
    padding-left: 15px;
}

.tb-cortana {
    width: 33px;
    padding-left: 14px;
}

.tb-div {
    width: 1px;
    height: 18px;
    background-color: #4a5863;
}

.tb-search {
    width: 299px;
    padding: 0 0 2px 29px;
    font-size: 10.300px;
    color: #c5ccd2;
}

.tb-div-two {
    margin-right: 15px;
}

.tb-apps {
    display: flex;
    height: 35px;
}

.app {
    position: relative;
    display: flex;
    align-items: center;
    justify-content: center;
    width: 45.900px;
    height: 35px;
}

.app-active {
    background-color: #3c4c59;
    border-bottom: 2px solid #a9d3ee;
}

.app-run::after {
    content: "";
    position: absolute;
    left: 4px;
    right: 4px;
    bottom: 0;
    height: 2px;
    background-color: #a9d3ee;
}

.badge {
    position: absolute;
    left: 24px;
    top: 14px;
    width: 17px;
    height: 17px;
    border: 1px solid #b9c0c6;
    border-radius: 50%;
    background-color: #2b3640;
    color: #eee;
    font-size: 10px;
    line-height: 15px;
    text-align: center;
}

.ps {
    fill: #35b0ea;
    font-size: 12px;
    font-family: "Open Sans", sans-serif;
    text-anchor: middle;
}

.tb-tray {
    display: flex;
    align-items: center;
    margin-left: auto;
    padding-right: 21px;
    font-size: 10.300px;
    color: #f0f0f0;
}

.tray-lang {
    margin: 0 12px 0 13px;
}

.clock {
    width: 58px;
    line-height: 17px;
    text-align: center;
    margin-right: 15px;
}

.cursor {
    position: absolute;
    left: 949px;
    top: 174px;
}
```
